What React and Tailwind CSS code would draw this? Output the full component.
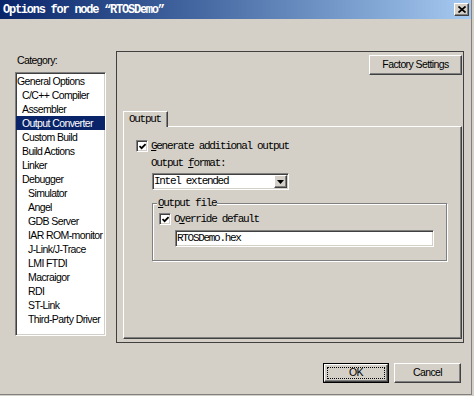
import React from 'react';

const SANS = "font-['Liberation_Sans',Tahoma,Arial,sans-serif] text-[10.5px] tracking-[-0.6px] text-black";
const MONO = "font-['Liberation_Mono','Courier_New',monospace] text-[11px] tracking-[-1.3px] text-black";
const SUNKEN =
  'border border-t-[#808080] border-l-[#808080] border-b-white border-r-white shadow-[inset_1px_1px_0_#404040,inset_-1px_-1px_0_#d4d0c8]';
const RAISED =
  'border border-t-white border-l-white border-b-[#404040] border-r-[#404040] shadow-[inset_-1px_-1px_0_#808080]';

const categories = [
  ['General Options', 0],
  ['C/C++ Compiler', 1],
  ['Assembler', 1],
  ['Output Converter', 1, true],
  ['Custom Build', 1],
  ['Build Actions', 1],
  ['Linker', 1],
  ['Debugger', 1],
  ['Simulator', 2],
  ['Angel', 2],
  ['GDB Server', 2],
  ['IAR ROM-monitor', 2],
  ['J-Link/J-Trace', 2],
  ['LMI FTDI', 2],
  ['Macraigor', 2],
  ['RDI', 2],
  ['ST-Link', 2],
  ['Third-Party Driver', 2],
];

const indent = ['pl-[1px]', 'pl-[6px]', 'pl-[12px]'];

function Checkbox() {
  return (
    <span className={`w-[12px] h-[12px] shrink-0 bg-white flex items-center justify-center ${SUNKEN}`}>
      <svg width="7" height="7" viewBox="0 0 7 7">
        <polyline points="0.5,3 2.6,5.2 6.6,1" fill="none" stroke="#000" strokeWidth="1.8" />
      </svg>
    </span>
  );
}

function Button({ children, className = '' }) {
  return (
    <div className={`h-[20px] bg-[#d4d0c8] flex items-center justify-center ${RAISED} ${SANS} ${className}`}>
      {children}
    </div>
  );
}

export default function App() {
  return (
    <div className="w-[474px] h-[396px] bg-[#d4d0c8] overflow-hidden">
      <div className="w-[472px] h-[395px] border-r border-b border-[#808080] flex flex-col">
        {/* title bar */}
        <div className="h-[19px] shrink-0 bg-gradient-to-r from-[#0a246a] to-[#a6caf0] flex items-center justify-between pl-[3px] pr-[2px]">
          <span className="font-['Liberation_Mono','Courier_New',monospace] text-[12px] font-bold tracking-[-1.25px] text-white whitespace-nowrap">
            Options for node “RTOSDemo”
          </span>
          <div className={`w-[15px] h-[13px] bg-[#d4d0c8] flex items-center justify-center ${RAISED}`}>
            <svg width="8" height="7" viewBox="0 0 8 7">
              <path d="M0.5 0.5 L7.5 6.5 M7.5 0.5 L0.5 6.5" stroke="#000" strokeWidth="1.7" />
            </svg>
          </div>
        </div>

        {/* body */}
        <div className="flex pt-[32px] pl-[15px] gap-[10px]">
          <div className="w-[91px] flex flex-col">
            <div className={`mt-[2px] leading-[14px] pl-[2px] ${SANS}`}>Category:</div>
            <div className={`mt-[5px] h-[264px] bg-white ${SUNKEN}`}>
              <div className="pt-[1px]">
                {categories.map(([name, level, selected]) => (
                  <div
                    key={name}
                    className={`h-[14px] leading-[14px] whitespace-nowrap ${indent[level]} ${SANS} ${
                      selected ? 'bg-[#0a246a] !text-white' : ''
                    }`}
                  >
                    {name}
                  </div>
                ))}
              </div>
            </div>
          </div>

          <div className="w-[348px] h-[292px] border border-[#404040] flex flex-col pt-[3px] pl-[6px] pr-[1px] pb-[3px]">
            <Button className="self-end w-[93px]">Factory Settings</Button>

            <div className="mt-[36px] flex">
              <div
                className={`relative z-10 -mb-[1px] h-[16px] w-[45px] pl-[5px] bg-[#d4d0c8] border-t border-l border-white border-r border-r-[#404040] shadow-[inset_-1px_0_0_#808080] leading-[15px] ${MONO}`}
              >
                Output
              </div>
            </div>

            <div className="flex-1 border border-t-white border-l-white border-b-[#404040] border-r-[#404040] shadow-[inset_-1px_-1px_0_#808080] pt-[13px] pl-[12px]">
              <div className="flex items-center gap-[3px] h-[12px]">
                <Checkbox />
                <span className={`leading-[14px] whitespace-nowrap ${MONO}`}>
                  <span className="underline">G</span>enerate additional output
                </span>
              </div>

              <div className="ml-[15px]">
                <div className={`mt-[4px] leading-[14px] whitespace-nowrap ${MONO}`}>
                  Output <span className="underline">f</span>ormat:
                </div>
                <div className={`mt-[3px] ml-[1px] w-[137px] h-[17px] bg-white flex items-center justify-between ${SUNKEN}`}>
                  <span className={`pl-[1px] leading-[13px] whitespace-nowrap ${MONO}`}>Intel extended</span>
                  <div className={`w-[13px] h-[13px] mr-[1px] bg-[#d4d0c8] flex items-center justify-center ${RAISED}`}>
                    <svg width="7" height="4" viewBox="0 0 7 4">
                      <path d="M0 0 L7 0 L3.5 4 Z" fill="#000" />
                    </svg>
                  </div>
                </div>

                <fieldset className="mt-[6px] ml-[1px] w-[295px] border border-[#808080] shadow-[inset_1px_1px_0_#fff,1px_1px_0_#fff] pl-[6px] pb-[13px]">
                  <legend className={`-ml-[2px] px-[1px] bg-[#d4d0c8] leading-[14px] whitespace-nowrap ${MONO}`}>
                    <span className="underline">O</span>utput file
                  </legend>
                  <div className="mt-[3px] flex items-center gap-[3px] h-[12px]">
                    <Checkbox />
                    <span className={`leading-[14px] whitespace-nowrap ${MONO}`}>
                      O<span className="underline">v</span>erride default
                    </span>
                  </div>
                  <div className={`mt-[5px] ml-[16px] w-[259px] h-[17px] bg-white flex items-center ${SUNKEN}`}>
                    <span className={`pl-[1px] leading-[13px] whitespace-nowrap ${MONO}`}>RTOSDemo.hex</span>
                  </div>
                </fieldset>
              </div>
            </div>
          </div>
        </div>

        {/* dialog buttons */}
        <div className="mt-[20px] flex justify-end gap-[5px] pr-[10px]">
          <div className="w-[66px] h-[20px] border border-black">
            <div className={`h-full bg-[#d4d0c8] p-[2px] border border-t-white border-l-white border-b-[#404040] border-r-[#404040] shadow-[inset_-1px_-1px_0_#808080]`}>
              <div className={`h-full border border-dotted border-black flex items-center justify-center ${SANS}`}>OK</div>
            </div>
          </div>
          <Button className="w-[67px]">Cancel</Button>
        </div>
      </div>
    </div>
  );
}
